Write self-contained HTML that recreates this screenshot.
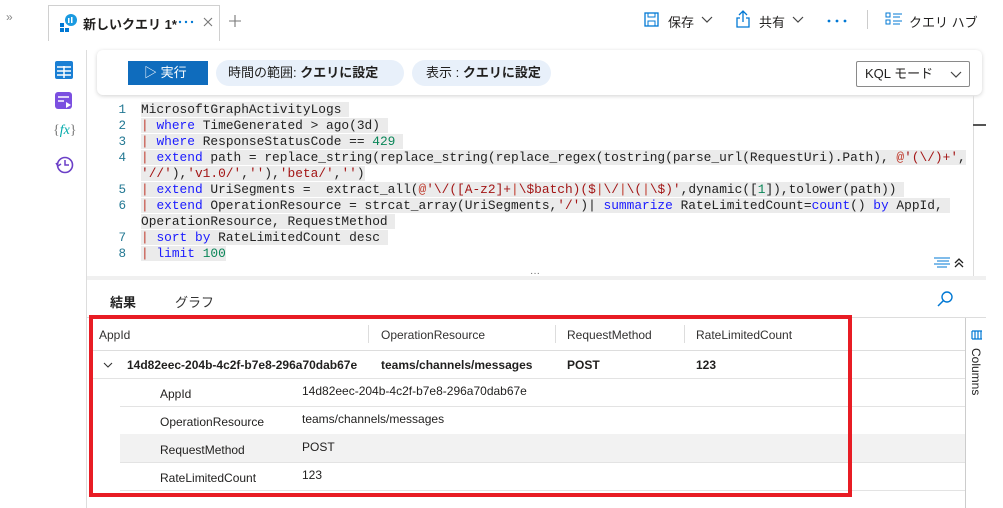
<!DOCTYPE html>
<html><head><meta charset="utf-8"><style>
*{margin:0;padding:0;box-sizing:border-box}
body{width:1003px;height:508px;overflow:hidden;background:#fff;font-family:"Liberation Sans","Noto Sans CJK JP",sans-serif;color:#201f1e;position:relative}
.a{position:absolute}
.code{position:absolute;left:141px;font-family:"Liberation Mono",monospace;font-size:12.85px;line-height:16px;white-space:pre;color:#222}
.code span.l{background:#ebebeb}
.ln{position:absolute;left:104px;width:22px;text-align:right;font-family:"Liberation Mono",monospace;font-size:12.6px;line-height:16px;color:#237893}
.k{color:#1a1aff}.s{color:#a31515}.n{color:#098658}.p{color:#c0392b}
.hd{font-size:12px;color:#323130}
.cell{position:absolute;font-size:12px}
</style></head><body>
<div class="a" style="left:6px;top:10px;color:#888;font-size:12px">»</div>
<div class="a" style="left:48px;top:5px;width:172px;height:36px;border:1px solid #d0d0d0;border-bottom:none;background:#fff"></div>
<svg class="a" style="left:59px;top:14px" width="18" height="18"><rect x="1" y="9" width="4" height="4" fill="#0078d4"/><rect x="1" y="14" width="4" height="4" fill="#0078d4"/><rect x="6" y="14" width="4" height="4" fill="#0078d4"/><circle cx="12" cy="6" r="6" fill="#1a9ae0"/><rect x="9" y="4" width="1.5" height="5" fill="#fff"/><rect x="12" y="3" width="1.5" height="6" fill="#fff"/></svg>
<div class="a" style="left:83px;top:14px;font-size:13px;font-weight:bold">新しいクエリ 1*</div>
<svg class="a" style="left:178px;top:20px" width="20" height="4"><circle cx="2" cy="2" r="1.2" fill="#0078d4"/><circle cx="8" cy="2" r="1.2" fill="#0078d4"/><circle cx="14" cy="2" r="1.2" fill="#0078d4"/></svg>
<svg class="a" style="left:203px;top:17px" width="10" height="10"><path d="M1 1l8 8M9 1l-8 8" stroke="#777" stroke-width="1.1"/></svg>
<svg class="a" style="left:229px;top:15px" width="12" height="12"><path d="M6 0v12M0 6h12" stroke="#777" stroke-width="1.1"/></svg>
<svg class="a" style="left:644px;top:12px" width="15" height="15"><rect x="1" y="1" width="13" height="13" fill="none" stroke="#0078d4" stroke-width="1.3"/><rect x="4" y="1" width="7" height="4" fill="none" stroke="#0078d4"/><rect x="4" y="9" width="7" height="5" fill="none" stroke="#0078d4"/></svg>
<div class="a" style="left:668px;top:12px;font-size:13px">保存</div>
<svg class="a" style="left:701px;top:16px" width="12" height="8"><path d="M1 1l5 5 5-5" fill="none" stroke="#444" stroke-width="1.2"/></svg>
<svg class="a" style="left:735px;top:10px" width="16" height="18"><path d="M8 1v11M4 5l4-4 4 4" fill="none" stroke="#0078d4" stroke-width="1.3"/><path d="M5 8H2v9h12V8h-3" fill="none" stroke="#0078d4" stroke-width="1.3"/></svg>
<div class="a" style="left:759px;top:12px;font-size:13px">共有</div>
<svg class="a" style="left:792px;top:16px" width="12" height="8"><path d="M1 1l5 5 5-5" fill="none" stroke="#444" stroke-width="1.2"/></svg>
<svg class="a" style="left:827px;top:19px" width="22" height="4"><circle cx="2" cy="2" r="1.4" fill="#0078d4"/><circle cx="10" cy="2" r="1.4" fill="#0078d4"/><circle cx="18" cy="2" r="1.4" fill="#0078d4"/></svg>
<div class="a" style="left:867px;top:10px;width:1px;height:19px;background:#ccc"></div>
<svg class="a" style="left:885px;top:12px" width="18" height="14"><rect x="1" y="1" width="4" height="4" fill="none" stroke="#0078d4"/><rect x="1" y="8" width="4" height="4" fill="none" stroke="#0078d4"/><path d="M8 2h9M8 5h7M8 9h9M8 12h7" stroke="#0078d4"/></svg>
<div class="a" style="left:909px;top:12px;font-size:13px">クエリ ハブ</div>
<div class="a" style="left:86px;top:50px;width:1px;height:458px;background:#ddd"></div>
<svg class="a" style="left:55px;top:61px" width="18" height="18"><rect x="0" y="0" width="18" height="18" rx="2" fill="#1a7fd4"/><path d="M2 6h14M2 10h14M2 14h14M9 5v12" stroke="#fff" stroke-width="1.5"/></svg>
<svg class="a" style="left:55px;top:92px" width="18" height="18"><rect x="0" y="0" width="17" height="17" rx="3" fill="#7b4fe0"/><path d="M3 5h11M3 9h6" stroke="#fff" stroke-width="1.5"/><path d="M11 10v6l5-3z" fill="#fff"/></svg>
<div class="a" style="left:53px;top:123px;font-size:14px;color:#777;font-family:'Liberation Serif',serif">{<i style="color:#0aa">fx</i>}</div>
<svg class="a" style="left:55px;top:155px" width="19" height="19"><circle cx="10" cy="10" r="7.5" fill="none" stroke="#6b3fc7" stroke-width="1.6"/><path d="M10 5v5h4" fill="none" stroke="#6b3fc7" stroke-width="1.5"/><path d="M1 8l2 3 3-2" fill="none" stroke="#6b3fc7" stroke-width="1.5"/></svg>
<div class="a" style="left:97px;top:50px;width:885px;height:45px;background:#fff;border-radius:6px;box-shadow:0 1px 4px rgba(0,0,0,.18)"></div>
<div class="a" style="left:128px;top:61px;width:80px;height:24px;background:#0f6cbd;color:#fff;font-size:13px;line-height:24px;padding-left:16px">▷ 実行</div>
<div class="a" style="left:216px;top:60px;width:188px;height:26px;border-radius:13px;background:#e8f0fa;font-size:13px;line-height:26px;padding-left:12px">時間の範囲: <b>クエリに設定</b></div>
<div class="a" style="left:412px;top:60px;width:139px;height:26px;border-radius:13px;background:#e8f0fa;font-size:13px;line-height:26px;padding-left:14px">表示 : <b>クエリに設定</b></div>
<div class="a" style="left:856px;top:61px;width:114px;height:26px;border:1px solid #8a8a8a;border-radius:2px;font-size:13px;line-height:24px;padding-left:8px">KQL モード</div>
<svg class="a" style="left:950px;top:71px" width="12" height="8"><path d="M1 1l5 5 5-5" fill="none" stroke="#444" stroke-width="1.2"/></svg>
<div class="a" style="left:973px;top:96px;width:1px;height:180px;background:#ddd"></div>
<div class="a" style="left:973px;top:124px;width:13px;height:2px;background:#555"></div>
<div class="ln" style="top:102px">1<br>2<br>3<br>4<br><br>5<br>6<br><br>7<br>8</div>
<div class="code" style="top:102px"><span class="l">MicrosoftGraphActivityLogs </span>
<span class="l"><span class="p">|</span> <span class="k">where</span> TimeGenerated &gt; ago(3d) </span>
<span class="l"><span class="p">|</span> <span class="k">where</span> ResponseStatusCode == <span class="n">429</span> </span>
<span class="l"><span class="p">|</span> <span class="k">extend</span> path = replace_string(replace_string(replace_regex(tostring(parse_url(RequestUri).Path), <span class="p">@</span><span class="s">'(\/)+'</span>,</span>
<span class="l"><span class="s">'//'</span>),<span class="s">'v1.0/'</span>,<span class="s">''</span>),<span class="s">'beta/'</span>,<span class="s">''</span>)</span>
<span class="l"><span class="p">|</span> <span class="k">extend</span> UriSegments =  extract_all(<span class="p">@</span><span class="s">'\/([A-z2]+</span><span class="p">|</span><span class="s">\$batch)($</span><span class="p">|</span><span class="s">\/</span><span class="p">|</span><span class="s">\(</span><span class="p">|</span><span class="s">\$)'</span>,dynamic([<span class="n">1</span>]),tolower(path)) </span>
<span class="l"><span class="p">|</span> <span class="k">extend</span> OperationResource = strcat_array(UriSegments,<span class="s">'/'</span>)| <span class="k">summarize</span> RateLimitedCount=<span class="k">count</span>() <span class="k">by</span> AppId, </span>
<span class="l">OperationResource, RequestMethod </span>
<span class="l"><span class="p">|</span> <span class="k">sort</span> <span class="k">by</span> RateLimitedCount desc </span>
<span class="l"><span class="p">|</span> <span class="k">limit</span> <span class="n">100</span></span></div>
<svg class="a" style="left:933px;top:256px" width="34" height="14"><path d="M1 2h16M4 5h12M1 8h16M4 11h10" stroke="#0078d4"/><path d="M22 7l4-4 4 4M22 11l4-4 4 4" fill="none" stroke="#222" stroke-width="1.3"/></svg>
<div class="a" style="left:87px;top:276px;width:899px;height:4px;background:#f0f0f0"></div>
<div class="a" style="left:530px;top:268px;font-size:10px;color:#666">···</div>
<div class="a" style="left:110px;top:292px;font-size:13px;font-weight:bold;color:#222">結果</div>
<div class="a" style="left:175px;top:292px;font-size:13px;color:#333">グラフ</div>
<svg class="a" style="left:936px;top:290px" width="18" height="18"><circle cx="11" cy="7" r="5" fill="none" stroke="#0078d4" stroke-width="1.4"/><path d="M7.5 10.5L2 16" stroke="#0078d4" stroke-width="1.5"/></svg>
<div class="a" style="left:87px;top:317px;width:899px;height:1px;background:#ddd"></div>
<div class="a" style="left:965px;top:318px;width:1px;height:190px;background:#ccc"></div>
<svg class="a" style="left:971px;top:330px" width="13" height="10"><path d="M1 1v8M4 1v8M7 1v8M10 1v8M1 1h10M1 9h10" stroke="#0078d4" stroke-width="1.2" fill="none"/></svg>
<div class="a" style="left:969px;top:348px;font-size:12px;writing-mode:vertical-rl;color:#222">Columns</div>
<div class="a" style="left:93px;top:350px;width:872px;height:1px;background:#ddd"></div>
<div class="a" style="left:93px;top:378px;width:872px;height:1px;background:#e3e3e3"></div>
<div class="a" style="left:120px;top:406px;width:845px;height:1px;background:#e3e3e3"></div>
<div class="a" style="left:120px;top:434px;width:845px;height:28px;background:#f2f2f2"></div>
<div class="a" style="left:120px;top:462px;width:845px;height:1px;background:#e3e3e3"></div>
<div class="a" style="left:120px;top:490px;width:845px;height:1px;background:#e3e3e3"></div>
<div class="a" style="left:368px;top:325px;width:1px;height:18px;background:#ddd"></div>
<div class="a" style="left:555px;top:325px;width:1px;height:18px;background:#ddd"></div>
<div class="a" style="left:684px;top:325px;width:1px;height:18px;background:#ddd"></div>
<div class="cell hd" style="left:99px;top:328px">AppId</div>
<div class="cell hd" style="left:381px;top:328px">OperationResource</div>
<div class="cell hd" style="left:567px;top:328px">RequestMethod</div>
<div class="cell hd" style="left:696px;top:328px">RateLimitedCount</div>
<svg class="a" style="left:103px;top:362px" width="10" height="6"><path d="M1 1l4 4 4-4" fill="none" stroke="#333" stroke-width="1.1"/></svg>
<div class="cell" style="left:127px;top:358px;font-weight:bold">14d82eec-204b-4c2f-b7e8-296a70dab67e</div>
<div class="cell" style="left:381px;top:358px;font-weight:bold">teams/channels/messages</div>
<div class="cell" style="left:567px;top:358px;font-weight:bold">POST</div>
<div class="cell" style="left:696px;top:358px;font-weight:bold">123</div>
<div class="cell" style="left:160px;top:387px">AppId</div><div class="cell" style="left:302px;top:384px">14d82eec-204b-4c2f-b7e8-296a70dab67e</div>
<div class="cell" style="left:160px;top:415px">OperationResource</div><div class="cell" style="left:302px;top:412px">teams/channels/messages</div>
<div class="cell" style="left:160px;top:443px">RequestMethod</div><div class="cell" style="left:302px;top:440px">POST</div>
<div class="cell" style="left:160px;top:471px">RateLimitedCount</div><div class="cell" style="left:302px;top:468px">123</div>
<div class="a" style="left:89px;top:315px;width:763px;height:182px;border:4px solid #e81c24"></div>
</body></html>
